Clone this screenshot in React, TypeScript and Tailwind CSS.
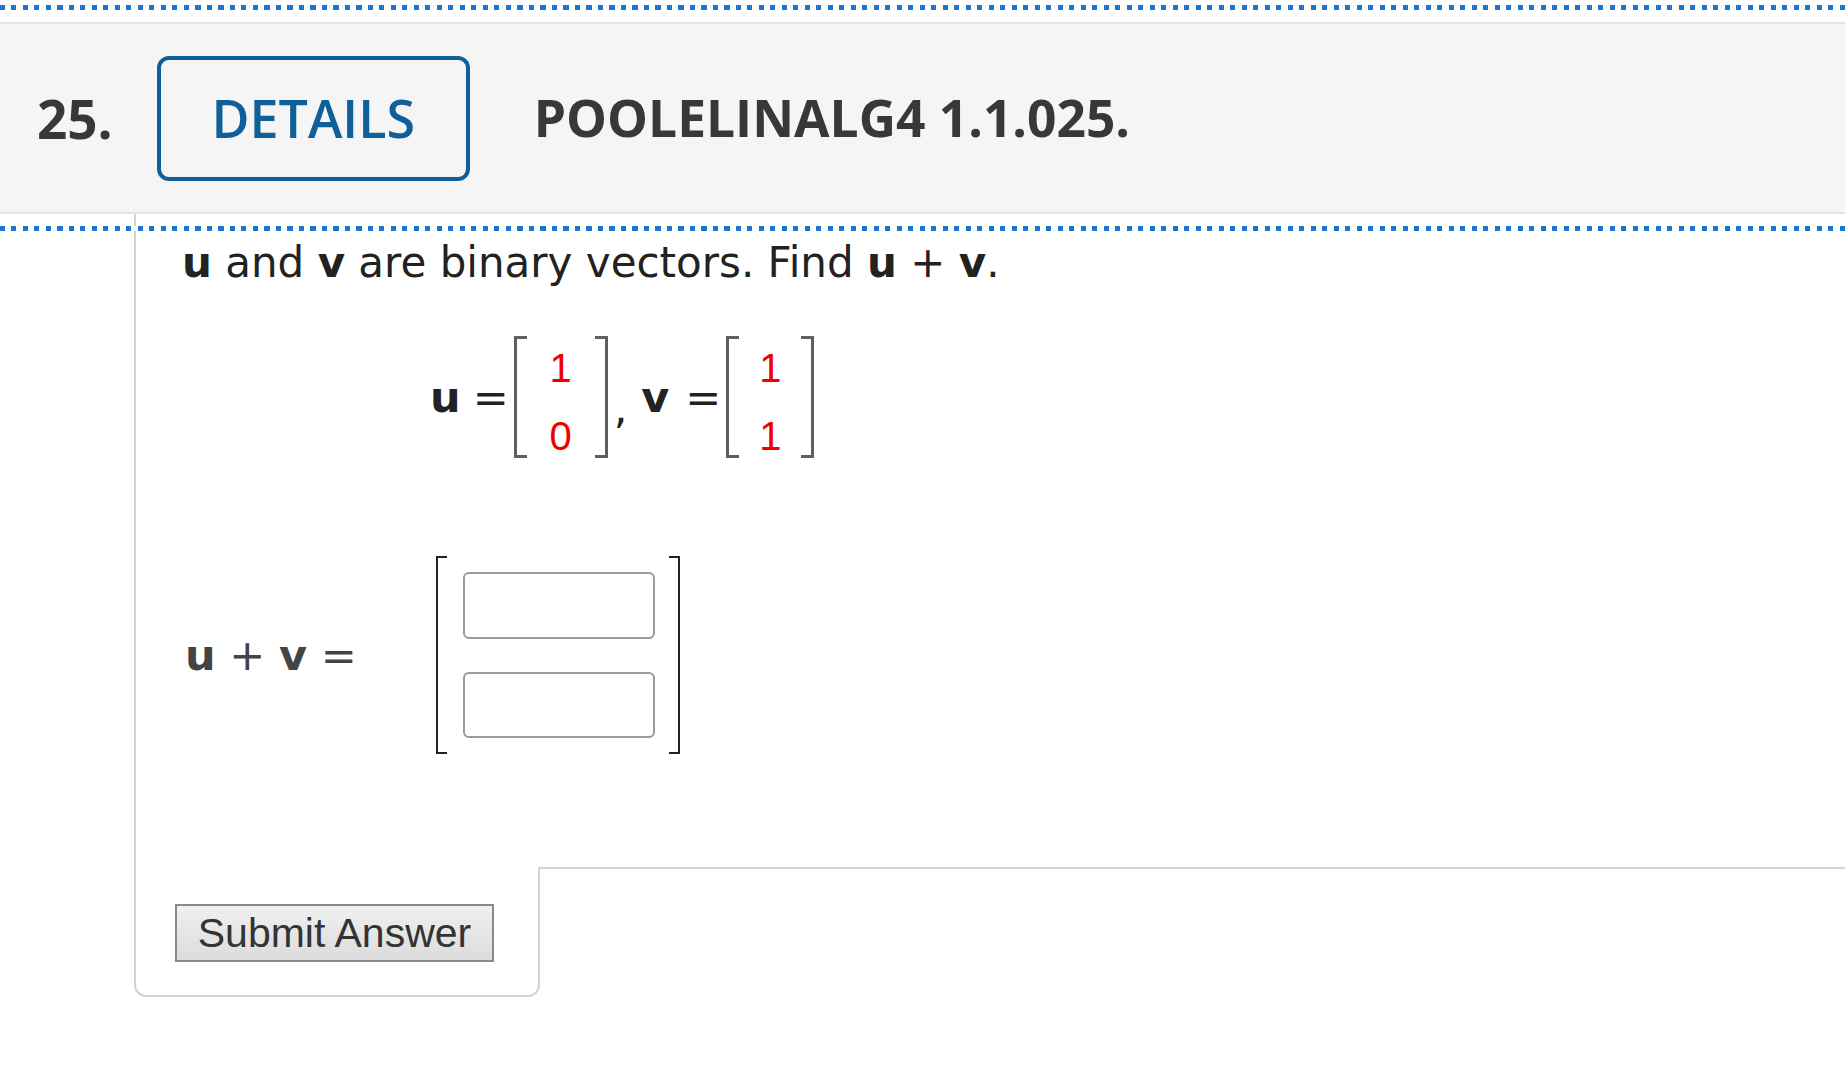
import React from "react";

const dotted =
  "h-[5px] w-full bg-[image:repeating-linear-gradient(90deg,#1b76d1_0px,#1b76d1_5px,transparent_5px,transparent_11.5px)]";

function Bracket({ side, h, thick, color, w }: { side: "l" | "r"; h: string; thick: string; color: string; w: string }) {
  return <div className={`${h} ${w} ${thick} ${color} ${side === "l" ? "border-r-0" : "border-l-0"}`} />;
}

export default function App() {
  return (
    <div className="min-h-screen w-full bg-white font-['DejaVu_Sans',sans-serif]">
      <div className="pt-[5px]">
        <div className={dotted} />
      </div>
      <div className="mt-[12px] flex h-[192px] items-center border-y-2 border-[#e5e5e5] bg-[#f5f5f5] font-['Open_Sans',sans-serif]">
        <div className="ml-[37px] text-[53px] font-bold leading-none text-[#383838]">25.</div>
        <div className="ml-[44px] flex h-[125px] w-[313px] items-center justify-center rounded-[12px] border-4 border-[#0f5f99] text-[52px] font-semibold leading-none text-[#0f5f99]">
          DETAILS
        </div>
        <div className="ml-[64px] text-[51.5px] font-bold leading-none text-[#383838]">POOLELINALG4 1.1.025.</div>
      </div>
      <div className="ml-[134px] h-[12px] border-l-2 border-[#d3d3d3]" />
      <div className={dotted} />
      <div className="ml-[134px]">
        <div className="border-l-2 border-[#d3d3d3] pb-[113px] pl-[46px] pt-[8px] text-[#222]">
          <p className="text-[42px] leading-[48px]">
            <b>u</b> and <b>v</b> are binary vectors. Find <b>u</b> + <b>v</b>.
          </p>
          <div className="ml-[248px] mt-[49px] flex items-center text-[43px] leading-none text-[#222]">
            <b>u</b>
            <span className="ml-[12px]">=</span>
            <div className="ml-[5px] flex items-stretch">
              <Bracket side="l" h="h-[122px]" w="w-[13px]" thick="border-[3px]" color="border-[#5e5e5e]" />
              <div className="flex w-[68px] flex-col items-center justify-center gap-[28px] pt-[10px] font-['Liberation_Sans',Arial,sans-serif] text-[40px] leading-none text-[#ee0000]">
                <span>1</span>
                <span>0</span>
              </div>
              <Bracket side="r" h="h-[122px]" w="w-[13px]" thick="border-[3px]" color="border-[#5e5e5e]" />
            </div>
            <span className="ml-[6px] mt-[22px]">,</span>
            <b className="ml-[14px]">v</b>
            <span className="ml-[16px]">=</span>
            <div className="ml-[5px] flex items-stretch">
              <Bracket side="l" h="h-[122px]" w="w-[13px]" thick="border-[3px]" color="border-[#5e5e5e]" />
              <div className="flex w-[62px] flex-col items-center justify-center gap-[28px] pt-[10px] font-['Liberation_Sans',Arial,sans-serif] text-[40px] leading-none text-[#ee0000]">
                <span>1</span>
                <span>1</span>
              </div>
              <Bracket side="r" h="h-[122px]" w="w-[13px]" thick="border-[3px]" color="border-[#5e5e5e]" />
            </div>
          </div>
          <div className="mt-[98px] flex items-center">
            <div className="ml-[3px] w-[251px] text-[43px] leading-none text-[#444]">
              <b>u</b> + <b>v</b> =
            </div>
            <div className="flex items-stretch">
              <Bracket side="l" h="h-[198px]" w="w-[11px]" thick="border-2" color="border-[#222]" />
              <div className="flex flex-col justify-center gap-[33px] pl-[16px] pr-[14px]">
                <input className="h-[67px] w-[192px] rounded-[6px] border-2 border-[#9a9a9a] bg-white outline-none" />
                <input className="h-[66px] w-[192px] rounded-[6px] border-2 border-[#9a9a9a] bg-white outline-none" />
              </div>
              <Bracket side="r" h="h-[198px]" w="w-[11px]" thick="border-2" color="border-[#222]" />
            </div>
          </div>
        </div>
        <div className="flex">
          <div className="h-[130px] w-[406px] rounded-b-[12px] border-x-2 border-b-2 border-[#d3d3d3] pl-[39px] pt-[37px]">
            <button className="flex h-[58px] w-[319px] items-center justify-center border-2 border-[#8a8a8a] bg-[linear-gradient(#f0f0f0,#dcdcdc)] font-['Liberation_Sans',Arial,sans-serif] text-[41px] leading-none text-[#333]">
              Submit Answer
            </button>
          </div>
          <div className="flex-1 border-t-2 border-[#d3d3d3]" />
        </div>
      </div>
    </div>
  );
}
